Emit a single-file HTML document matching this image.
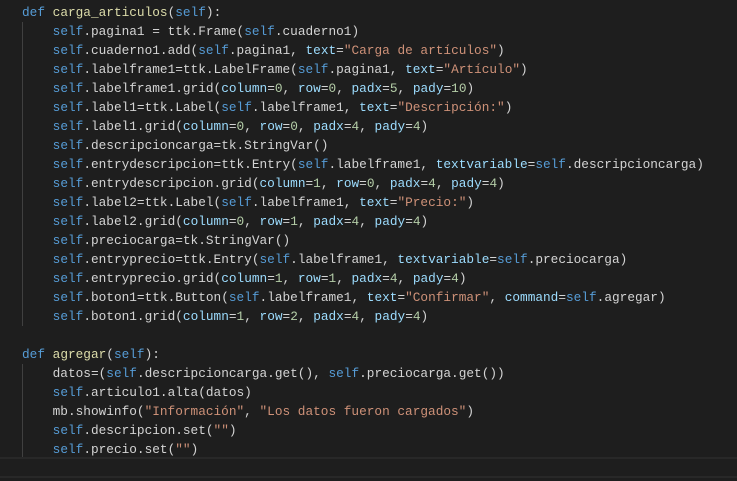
<!DOCTYPE html>
<html><head><meta charset="utf-8"><style>
html,body{margin:0;padding:0;background:#1e1e1e;width:737px;height:481px;overflow:hidden}
.code{position:absolute;left:22px;top:2.5px;font-family:"Liberation Mono",monospace;font-size:12.78px;line-height:19px;color:#d4d4d4;white-space:pre}
.k{color:#569cd6}.f{color:#dcdcaa}.s{color:#ce9178}.p{color:#9cdcfe}.n{color:#b5cea8}
.g{position:absolute;left:22px;width:1px;background:#404040}
.hl{position:absolute;left:0;top:457px;width:737px;height:17px;border-top:2px solid #282828;border-bottom:2px solid #282828}
</style></head><body>
<div class="g" style="top:22px;height:304px"></div>
<div class="g" style="top:364px;height:95px"></div>
<div class="hl"></div>
<div class="code"><span class="k">def</span> <span class="f">carga_articulos</span>(<span class="k">self</span>):
    <span class="k">self</span>.pagina1 = ttk.Frame(<span class="k">self</span>.cuaderno1)
    <span class="k">self</span>.cuaderno1.add(<span class="k">self</span>.pagina1, <span class="p">text</span>=<span class="s">"Carga de artículos"</span>)
    <span class="k">self</span>.labelframe1=ttk.LabelFrame(<span class="k">self</span>.pagina1, <span class="p">text</span>=<span class="s">"Artículo"</span>)
    <span class="k">self</span>.labelframe1.grid(<span class="p">column</span>=<span class="n">0</span>, <span class="p">row</span>=<span class="n">0</span>, <span class="p">padx</span>=<span class="n">5</span>, <span class="p">pady</span>=<span class="n">10</span>)
    <span class="k">self</span>.label1=ttk.Label(<span class="k">self</span>.labelframe1, <span class="p">text</span>=<span class="s">"Descripción:"</span>)
    <span class="k">self</span>.label1.grid(<span class="p">column</span>=<span class="n">0</span>, <span class="p">row</span>=<span class="n">0</span>, <span class="p">padx</span>=<span class="n">4</span>, <span class="p">pady</span>=<span class="n">4</span>)
    <span class="k">self</span>.descripcioncarga=tk.StringVar()
    <span class="k">self</span>.entrydescripcion=ttk.Entry(<span class="k">self</span>.labelframe1, <span class="p">textvariable</span>=<span class="k">self</span>.descripcioncarga)
    <span class="k">self</span>.entrydescripcion.grid(<span class="p">column</span>=<span class="n">1</span>, <span class="p">row</span>=<span class="n">0</span>, <span class="p">padx</span>=<span class="n">4</span>, <span class="p">pady</span>=<span class="n">4</span>)
    <span class="k">self</span>.label2=ttk.Label(<span class="k">self</span>.labelframe1, <span class="p">text</span>=<span class="s">"Precio:"</span>)
    <span class="k">self</span>.label2.grid(<span class="p">column</span>=<span class="n">0</span>, <span class="p">row</span>=<span class="n">1</span>, <span class="p">padx</span>=<span class="n">4</span>, <span class="p">pady</span>=<span class="n">4</span>)
    <span class="k">self</span>.preciocarga=tk.StringVar()
    <span class="k">self</span>.entryprecio=ttk.Entry(<span class="k">self</span>.labelframe1, <span class="p">textvariable</span>=<span class="k">self</span>.preciocarga)
    <span class="k">self</span>.entryprecio.grid(<span class="p">column</span>=<span class="n">1</span>, <span class="p">row</span>=<span class="n">1</span>, <span class="p">padx</span>=<span class="n">4</span>, <span class="p">pady</span>=<span class="n">4</span>)
    <span class="k">self</span>.boton1=ttk.Button(<span class="k">self</span>.labelframe1, <span class="p">text</span>=<span class="s">"Confirmar"</span>, <span class="p">command</span>=<span class="k">self</span>.agregar)
    <span class="k">self</span>.boton1.grid(<span class="p">column</span>=<span class="n">1</span>, <span class="p">row</span>=<span class="n">2</span>, <span class="p">padx</span>=<span class="n">4</span>, <span class="p">pady</span>=<span class="n">4</span>)

<span class="k">def</span> <span class="f">agregar</span>(<span class="k">self</span>):
    datos=(<span class="k">self</span>.descripcioncarga.get(), <span class="k">self</span>.preciocarga.get())
    <span class="k">self</span>.articulo1.alta(datos)
    mb.showinfo(<span class="s">"Información"</span>, <span class="s">"Los datos fueron cargados"</span>)
    <span class="k">self</span>.descripcion.set(<span class="s">""</span>)
    <span class="k">self</span>.precio.set(<span class="s">""</span>)
</div>
</body></html>
